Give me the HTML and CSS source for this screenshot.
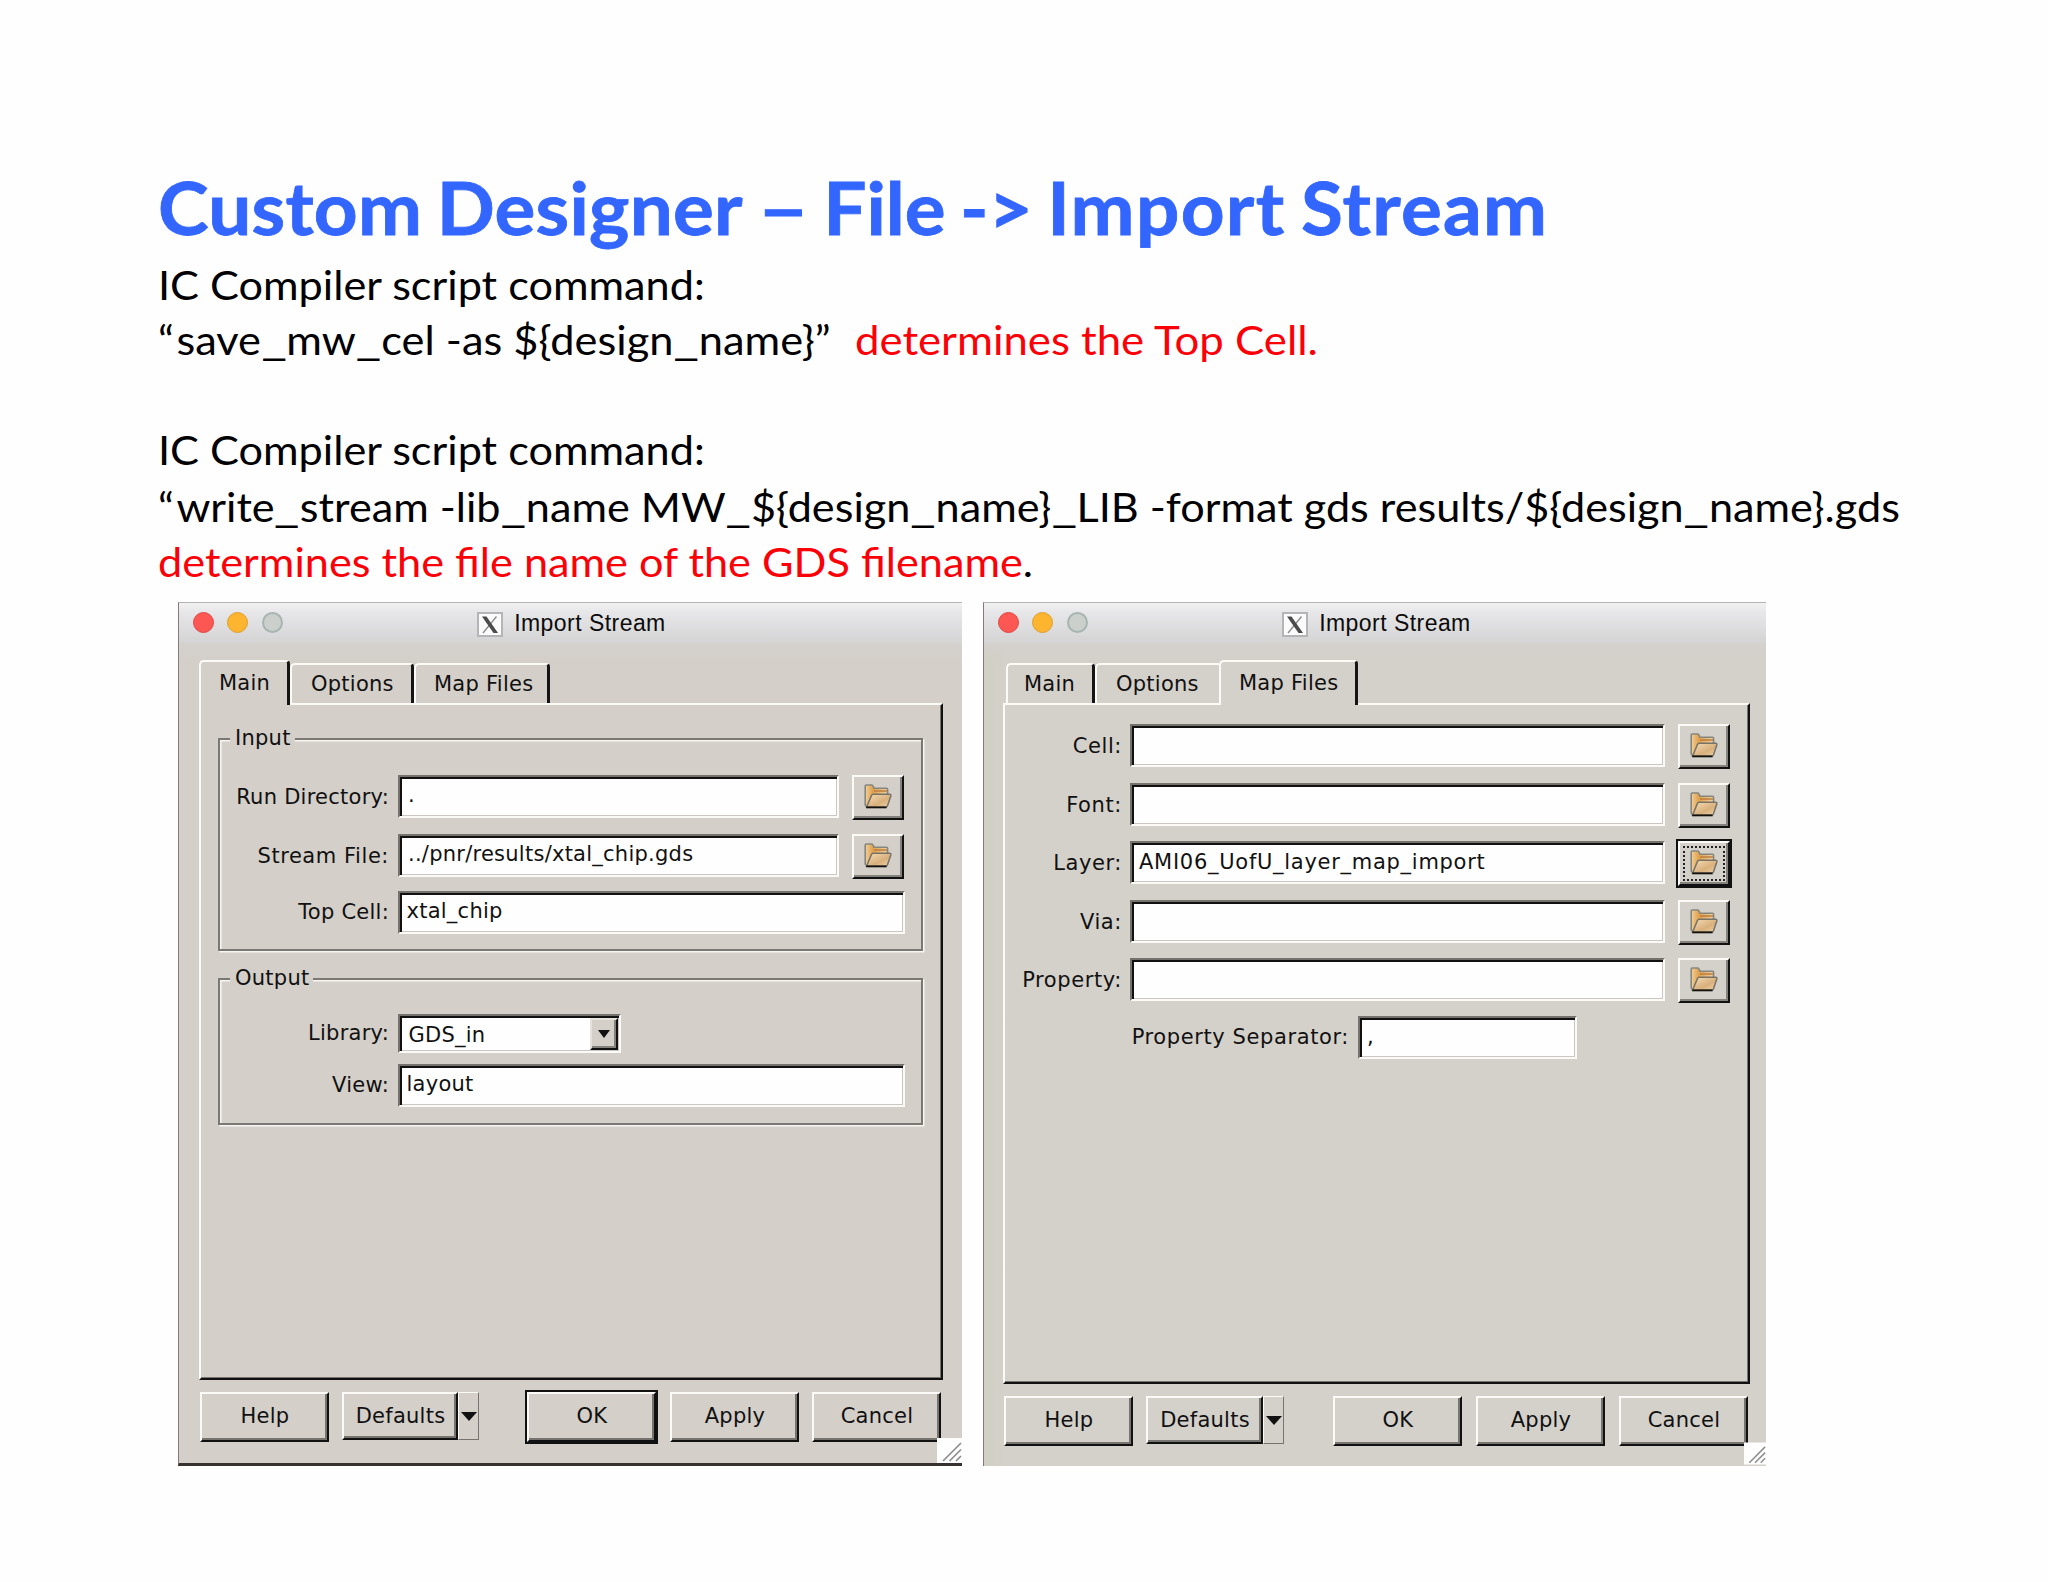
FILE: index.html
```html
<!DOCTYPE html>
<html lang="en">
<head>
    <meta charset="UTF-8">
    <meta name="viewport" content="width=device-width, initial-scale=1.0">
    <title>Custom Designer - Import Stream</title>
    <link rel="stylesheet" href="styles.css">
</head>
<body>
    <!-- shared icons -->
    <svg class="defs" width="0" height="0">
        <defs>
            <linearGradient id="back" x1="0" y1="0" x2="1" y2="0">
                <stop offset="0" stop-color="#f3cf98"/>
                <stop offset="0.35" stop-color="#dfa04c"/>
                <stop offset="1" stop-color="#f0d2a6"/>
            </linearGradient>
            <linearGradient id="front" x1="0" y1="0" x2="1" y2="1">
                <stop offset="0" stop-color="#f6deb8"/>
                <stop offset="0.6" stop-color="#d9b07c"/>
                <stop offset="1" stop-color="#f0d4aa"/>
            </linearGradient>
        </defs>
        <symbol id="folder" viewBox="0 0 28 25">
            <path d="M1.2 21V2Q1.2 1 2.2 1H7.5Q8.5 1 9 2L10 4.2H22.5Q23.6 4.2 23.6 5.4V10L5 22.5H2.5Z" fill="url(#back)" stroke="#85877f" stroke-width="1.6"/>
            <path d="M10 7H23" stroke="#b9793a" stroke-width="1.4"/>
            <path d="M2.6 23L7.4 11.6Q8 10.3 9.2 10.3H25.6Q27.3 10.3 26.8 12L23.4 22Q23 23 22 23Z" fill="url(#front)" stroke="#777368" stroke-width="1.5"/>
            <path d="M2.2 23.4H22.6" stroke="#15120c" stroke-width="1.8"/>
        </symbol>
        <symbol id="xlogo" viewBox="0 0 26 25">
            <rect x="1" y="1" width="24" height="23" fill="#fbfbfb" stroke="#b5b5b8" stroke-width="2"/>
            <path d="M19.5 4.5L6 21" stroke="#8d8d8d" stroke-width="1.4"/>
            <path d="M5 4.5H9.5L21 21H16.5Z" fill="#4b4b4b"/>
        </symbol>
        <symbol id="grip" viewBox="0 0 25 25">
            <rect width="25" height="25" fill="#fefefe"/>
            <path d="M6 23L24 5M12.5 23L24 11.5M19 23L24 18" stroke="#8e8e8e" stroke-width="1.7"/>
        </symbol>
    </svg>

    <h1><span class="fit"><span class="product">Custom Designer</span> <span class="dash">–</span> File -&gt; <span class="action">Import Stream</span></span></h1>
    <div class="notes">
        <p><span class="fit">IC Compiler script command:</span></p>
        <p><span class="fit save"><span class="quote">“</span>save<span class="us">_</span>mw<span class="us">_</span>cel -as ${design<span class="us">_</span>name}”&nbsp;</span> <span class="fit red topcell">determines the Top Cell.</span></p>
        <p>&nbsp;</p>
        <p><span class="fit">IC Compiler script command:</span></p>
        <p class="lower"><span class="fit write"><span class="quote">“</span>write<span class="us">_</span>stream -lib<span class="us">_</span>name MW<span class="us">_</span>${design<span class="us">_</span>name}<span class="us">_</span>LIB -format gds results/${design<span class="us">_</span>name}.gds</span></p>
        <p><span class="fit"><span class="red">determines the file name of the GDS filename</span>.</span></p>
    </div>

    <div class="windows">
        <div class="window main-window">
            <div class="titlebar">
                <span class="dot close"></span>
                <span class="dot minimize"></span>
                <span class="dot zoom"></span>
                <svg class="xlogo"><use href="#xlogo"/></svg>
                <span class="caption">Import Stream</span>
            </div>
            <div class="tabs">
                <div class="tab active">Main</div>
                <div class="tab">Options</div>
                <div class="tab">Map Files</div>
            </div>
            <div class="pane">
                <div class="group">
                    <div class="legend">Input</div>
                    <div class="row">
                        <label>Run Directory:</label>
                        <div class="field">.</div>
                        <div class="browse"><svg><use href="#folder"/></svg></div>
                    </div>
                    <div class="row">
                        <label class="loose">Stream File:</label>
                        <div class="field">../pnr/results/xtal_chip.gds</div>
                        <div class="browse"><svg><use href="#folder"/></svg></div>
                    </div>
                    <div class="row">
                        <label>Top Cell:</label>
                        <div class="field wide">xtal_chip</div>
                    </div>
                </div>
                <div class="group output">
                    <div class="legend">Output</div>
                    <div class="row">
                        <label>Library:</label>
                        <div class="field select">GDS_in<span class="drop"><i class="arrow"></i></span></div>
                    </div>
                    <div class="row">
                        <label>View:</label>
                        <div class="field wide">layout</div>
                    </div>
                </div>
            </div>
            <div class="footer">
                <div class="btn">Help</div>
                <div class="btn defaults">Defaults</div>
                <div class="more"><i class="arrow big"></i></div>
                <div class="btn ok primary">OK</div>
                <div class="btn">Apply</div>
                <div class="btn">Cancel</div>
            </div>
            <svg class="grip"><use href="#grip"/></svg>
        </div>

        <div class="window map-window">
            <div class="titlebar">
                <span class="dot close"></span>
                <span class="dot minimize"></span>
                <span class="dot zoom"></span>
                <svg class="xlogo"><use href="#xlogo"/></svg>
                <span class="caption">Import Stream</span>
            </div>
            <div class="tabs">
                <div class="tab">Main</div>
                <div class="tab">Options</div>
                <div class="tab active">Map Files</div>
            </div>
            <div class="pane">
                <div class="row">
                    <label>Cell:</label>
                    <div class="field"></div>
                    <div class="browse"><svg><use href="#folder"/></svg></div>
                </div>
                <div class="row">
                    <label>Font:</label>
                    <div class="field"></div>
                    <div class="browse"><svg><use href="#folder"/></svg></div>
                </div>
                <div class="row">
                    <label>Layer:</label>
                    <div class="field">AMI06_UofU_layer_map_import</div>
                    <div class="browse focused"><svg><use href="#folder"/></svg></div>
                </div>
                <div class="row">
                    <label>Via:</label>
                    <div class="field"></div>
                    <div class="browse"><svg><use href="#folder"/></svg></div>
                </div>
                <div class="row">
                    <label>Property:</label>
                    <div class="field"></div>
                    <div class="browse"><svg><use href="#folder"/></svg></div>
                </div>
                <div class="row separator">
                    <label>Property Separator:</label>
                    <div class="field">,</div>
                </div>
            </div>
            <div class="footer">
                <div class="btn">Help</div>
                <div class="btn defaults">Defaults</div>
                <div class="more"><i class="arrow big"></i></div>
                <div class="btn ok">OK</div>
                <div class="btn">Apply</div>
                <div class="btn">Cancel</div>
            </div>
            <svg class="grip"><use href="#grip"/></svg>
        </div>
    </div>
</body>
</html>
```
FILE: styles.css
```css
* {
    margin: 0;
    padding: 0;
    box-sizing: border-box;
}
body {
    background: #fefefe;
    color: #000;
    padding: 163px 0 0 158px;
    font-family: Lato, Carlito, sans-serif;
}
.defs {
    position: absolute;
}
h1 {
    font-size: 72px;
    line-height: 88px;
    font-weight: bold;
    color: #3366ff;
    margin-bottom: 7px;
    -webkit-text-stroke: 0.8px #3366ff;
}
.notes {
    font-size: 40px;
    height: 344px;
}
.notes p {
    line-height: 55px;
    white-space: nowrap;
}
.notes .lower {
    padding-top: 2px;
}
.fit {
    display: inline-block;
    white-space: nowrap;
    transform: scaleX(1.081);
    transform-origin: left;
}
h1 .fit {
    word-spacing: -4px;
    transform: scaleX(1.062);
}
.product {
    letter-spacing: 0.2px;
}
.dash {
    display: inline-block;
    margin: 0 3px 0 4px;
    transform: scaleX(1.17);
}
.action {
    letter-spacing: 1.2px;
}
.save {
    transform: scaleX(1.084);
}
.write {
    transform: scaleX(1.08);
}
.topcell {
    margin-left: 56px;
    transform: scaleX(1.093);
}
.quote {
    margin-right: 2.4px;
}
/* wider underscore */
.us {
    display: inline-block;
    margin: 0 2.5px;
    transform: scaleX(1.3);
}
.red {
    color: #fb0007;
}

/* dialogs */
.windows {
    display: flex;
    gap: 21px;
    margin-left: 20px;
    font-family: "DejaVu Sans", sans-serif;
    font-size: 21px;
    letter-spacing: 0.25px;
    color: #111;
}
.window {
    position: relative;
    width: 784px;
    height: 864px;
    background: #d4cfc9;
    border-top: 1px solid #b4b4b6;
    border-left: 1px solid #87797a;
}
.main-window {
    border-bottom: 3px solid #383132;
}
.map-window {
    background: linear-gradient(to right, #d0d0c3, #d4d0ca 20px);
    width: 783px;
}
.titlebar {
    display: flex;
    align-items: center;
    height: 57px;
    padding: 0 0 18px 14px;
    background: linear-gradient(#f1f1f2, #e6e6e8 10px, #d6d5d6 38px, #d4d1cd 42px, transparent);
}
.dot {
    width: 21px;
    height: 21px;
    border-radius: 50%;
    margin-right: 13.4px;
}
.close {
    background: #fc5753;
    border: 1px solid #df4744;
}
.minimize {
    background: #fdb42e;
    border: 1px solid #dd9f30;
}
.zoom {
    background: #ccd0cd;
    border: 2px solid #a7b5b0;
}
.xlogo {
    width: 26px;
    height: 25px;
    margin: 3px 11px 0 181px;
}
.caption {
    padding-top: 2px;
    font-family: "Liberation Sans", Arial, sans-serif;
    font-size: 23px;
    letter-spacing: 0.45px;
    color: #0c0c0c;
}
.tabs {
    display: flex;
    align-items: flex-end;
    position: relative;
    z-index: 1;
    height: 45px;
    margin: 0 0 -2px 20px;
}
.tab {
    height: 40px;
    margin-bottom: 2px;
    padding-left: 19px;
    line-height: 38px;
    border-top: 2px solid #fbfaf7;
    border-left: 2px solid #fbfaf7;
    border-right: 3px solid #161514;
    border-radius: 5px 4px 0 0;
    background: #d4cfc9;
    width: 124px;
}
.tab.active {
    height: 45px;
    margin-bottom: 0;
    line-height: 42px;
}
.main-window .tab:first-child {
    width: 91px;
    padding-left: 18px;
}
.main-window .tab:last-child {
    width: 136px;
    padding-left: 18px;
}
.pane {
    height: 677px;
    margin: 0 19px 0 20px;
    padding: 33px 17px 0;
    border-top: 2px solid #fbfaf7;
    border-left: 2px solid #fbfaf7;
    border-right: 2px solid #111;
    border-bottom: 2px solid #111;
    box-shadow: inset -1px -1px 0 #77736f;
}
.group {
    position: relative;
    height: 213px;
    margin-right: 1px;
    padding-top: 35px;
    border: 2px solid #7b7772;
    box-shadow: 1.5px 1.5px 0 #f8f6f3, inset 1.5px 1.5px 0 #f8f6f3;
}
.group.output {
    height: 147px;
    margin-top: 27px;
    padding-top: 34px;
}
.legend {
    position: absolute;
    left: 10px;
    top: -14px;
    padding: 0 4px 0 5px;
    line-height: 24px;
    background: #d4cfc9;
}
.row {
    display: flex;
    height: 45px;
    margin-bottom: 13.5px;
}
.group .row:nth-child(3) {
    margin-bottom: 12.5px;
}
label {
    width: 169px;
    margin-right: 9px;
    line-height: 45px;
    text-align: right;
    white-space: nowrap;
}
label.loose {
    letter-spacing: 0.55px;
}
.group .row:last-child label {
    line-height: 42px;
}
.field {
    width: 441px;
    height: 43px;
    padding-left: 8px;
    line-height: 37px;
    background: #fefefe;
    border: 2px solid;
    border-color: #75716c #fbfaf7 #fbfaf7 #75716c;
    box-shadow: inset 2px 2px 0 #111, inset -1px -1px 0 #cbc7c2;
}
.field.wide {
    width: 507px;
    padding-left: 6.5px;
    line-height: 36px;
}
.select {
    display: flex;
    justify-content: space-between;
    width: 223px;
    height: 39px;
    padding: 2px 1px 1px 8.5px;
    line-height: 34px;
}
.drop {
    display: flex;
    align-items: center;
    justify-content: center;
    width: 28px;
    height: 32px;
    background: #d4cfc9;
    border: 2px solid;
    border-color: #e6e3df #111 #111 #e6e3df;
    box-shadow: inset -2px -2px 0 #85817c;
}
.arrow {
    border: 6px solid transparent;
    border-top: 8px solid #111;
    border-bottom: 0;
}
.arrow.big {
    border-width: 9px 8px 0;
}
.output .row {
    height: 39px;
    margin-bottom: 11px;
}
.output label {
    line-height: 39px;
}
.browse {
    display: flex;
    align-items: center;
    justify-content: center;
    width: 52px;
    height: 45px;
    margin-left: 13px;
    padding-bottom: 2px;
    border: 2px solid;
    border-color: #fbfaf7 #111 #111 #fbfaf7;
    box-shadow: inset -2px -2px 0 #85817c;
}
.browse svg {
    width: 28px;
    height: 25px;
}
.browse.focused {
    outline: 2px solid #111;
    position: relative;
}
.browse.focused::after {
    content: "";
    position: absolute;
    inset: 3px 3px 3px 3px;
    border: 2px dotted #222;
}
.footer {
    display: flex;
    margin: 12px 0 0 21px;
}
.btn {
    width: 129px;
    height: 50px;
    margin-right: 13px;
    padding-left: 1px;
    line-height: 45px;
    text-align: center;
    border: 2px solid;
    border-color: #fbfaf7 #111 #111 #fbfaf7;
    box-shadow: inset -2px -2px 0 #77736f;
}
.btn.defaults {
    width: 116px;
    height: 48px;
    margin-right: 0;
}
.more {
    display: flex;
    align-items: center;
    justify-content: center;
    width: 21px;
    height: 48px;
    border: 1px solid;
    border-color: #fbfaf7 #77736f #77736f #fbfaf7;
}
.ok {
    margin-left: 48px;
}
.primary {
    margin-right: 14px;
    outline: 2px solid #111;
}
.grip {
    position: absolute;
    right: 0;
    bottom: 0;
    width: 25px;
    height: 25px;
}

/* second dialog */
.map-window .tabs {
    margin-left: 22px;
}
.map-window .tab {
    background: #d4d0ca;
}
.map-window .tab:first-child {
    width: 89px;
    padding-left: 16px;
}
.map-window .tab:nth-child(2) {
    border-right: 0;
    border-top-right-radius: 0;
}
.map-window .tab.active {
    width: 139px;
    padding-left: 18px;
}
.map-window .pane {
    height: 681px;
    margin: 0 16px 0 19px;
    padding: 19px 0 0;
}
.map-window label {
    width: 117px;
    margin-right: 8px;
    letter-spacing: 0.6px;
}
.map-window .field {
    width: 535px;
    padding-left: 7px;
    line-height: 38px;
    letter-spacing: 0.72px;
}
.map-window .separator {
    margin-top: -1px;
}
.map-window .separator label {
    width: 344px;
    margin-right: 9px;
    line-height: 43px;
}
.map-window .separator .field {
    width: 219px;
}
.map-window .footer {
    margin-left: 20px;
}
.map-window .ok {
    margin-left: 49px;
}
.map-window .btn {
    margin-right: 14px;
}
.map-window .btn:first-child {
    margin-right: 13px;
}
.map-window .btn.defaults {
    width: 117px;
    margin-right: 0;
}
.map-window .grip {
    width: 22px;
}
```
